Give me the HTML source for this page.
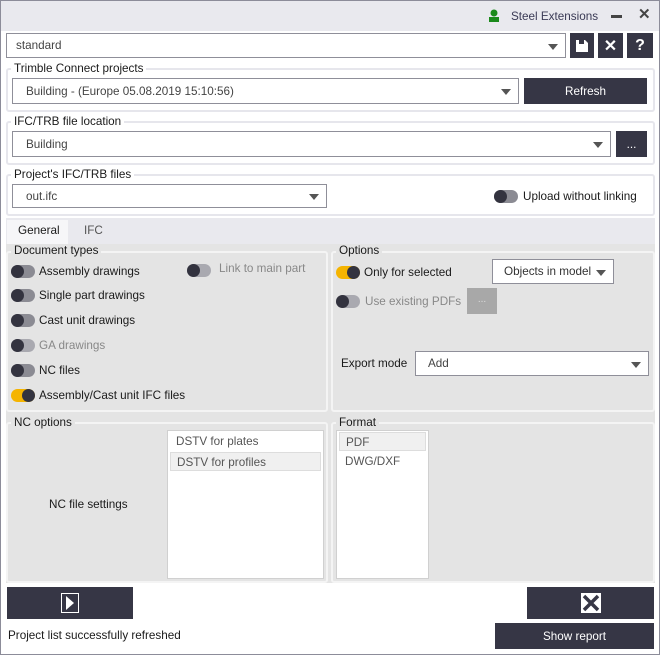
<!DOCTYPE html>
<html><head><meta charset="utf-8"><style>
*{box-sizing:border-box;margin:0;padding:0}
body{width:660px;height:655px;overflow:hidden;font-family:"Liberation Sans",sans-serif;font-size:11.7px;color:#1a1a1a;background:#fff;position:relative}
.a{position:absolute}
.combo{position:absolute;background:#fff;border:1px solid #8f8f99;color:#444;padding-left:13px;display:flex;align-items:center}
.combo:after{content:"";position:absolute;right:7px;top:50%;margin-top:-2px;border-left:5px solid transparent;border-right:5px solid transparent;border-top:6px solid #555}
.btn{position:absolute;background:#363645;color:#fff;display:flex;align-items:center;justify-content:center}
.grp{position:absolute;border:2px solid #e6e6ec;border-radius:3px}
.lbl{position:absolute;background:#fff;padding:0 3px;line-height:14px}
.gl{background:#e4e4e4}
.tg{position:absolute;width:24px;height:13px;border-radius:7px;background:#8b8b93}
.tg:after{content:"";position:absolute;left:0;top:0;width:13px;height:13px;border-radius:50%;background:#33333f}
.tg.on{background:#f5b400}
.tg.on:after{left:11px}
.tg.dis{background:#a9a9b0}
.t{position:absolute;line-height:14px}
.list{position:absolute;background:#fff;border:1px solid #d0d0d0}
.it{height:19px;line-height:19px;padding-left:6px;color:#555;margin:1px 2px 0}
.sel{background:#f0f0f0;border:1px solid #ddd}
</style></head><body>
<div class="a" style="left:0;top:0;width:660px;height:31px;background:#e9e9ee"></div>
<svg class="a" style="left:488px;top:9px" width="12" height="13"><circle cx="6" cy="4" r="3.5" fill="#1b8a1b"/><rect x="1" y="8" width="10" height="5" fill="#1b8a1b"/></svg>
<div class="t" style="left:511px;top:10px;color:#3a3a55">Steel Extensions</div>
<div class="a" style="left:611px;top:15px;width:11px;height:3px;background:#444"></div>
<div class="t" style="left:638px;top:8px;font-weight:bold;font-size:15px;color:#444">✕</div>

<div class="combo" style="left:6px;top:33px;width:560px;height:25px;padding-left:9px">standard</div>
<div class="btn" style="left:570px;top:33px;width:24px;height:25px"><svg width="12" height="12"><path d="M0 0H9L12 3V12H0Z" fill="#fff"/><rect x="3" y="0" width="5" height="4" fill="#363645"/></svg></div>
<div class="btn" style="left:598px;top:33px;width:25px;height:25px;font-weight:bold;font-size:16px">✕</div>
<div class="btn" style="left:627px;top:33px;width:26px;height:25px;font-weight:bold;font-size:16px">?</div>

<div class="grp" style="left:6px;top:68px;width:649px;height:44px"></div>
<div class="lbl" style="left:11px;top:62px">Trimble Connect projects</div>
<div class="combo" style="left:12px;top:78px;width:507px;height:26px">Building - (Europe 05.08.2019 15:10:56)</div>
<div class="btn" style="left:524px;top:78px;width:123px;height:26px">Refresh</div>

<div class="grp" style="left:6px;top:121px;width:649px;height:44px"></div>
<div class="lbl" style="left:11px;top:115px">IFC/TRB file location</div>
<div class="combo" style="left:12px;top:131px;width:599px;height:26px">Building</div>
<div class="btn" style="left:616px;top:131px;width:31px;height:26px">...</div>

<div class="grp" style="left:6px;top:174px;width:649px;height:42px"></div>
<div class="lbl" style="left:11px;top:168px">Project's IFC/TRB files</div>
<div class="combo" style="left:12px;top:184px;width:315px;height:24px">out.ifc</div>
<div class="tg" style="left:494px;top:190px"></div>
<div class="t" style="left:523px;top:190px">Upload without linking</div>

<div class="a" style="left:6px;top:218px;width:649px;height:365px;background:#e4e4e4"></div>
<div class="a" style="left:6px;top:218px;width:649px;height:26px;background:#e9e9ee"></div>
<div class="a" style="left:7px;top:220px;width:61px;height:24px;background:#f6f6f8"></div>
<div class="t" style="left:18px;top:224px">General</div>
<div class="t" style="left:84px;top:224px;color:#555">IFC</div>

<div class="grp" style="left:6px;top:251px;width:322px;height:161px;border-color:#f4f4f4"></div>
<div class="lbl gl" style="left:11px;top:244px">Document types</div>
<div class="tg" style="left:11px;top:265px"></div><div class="t" style="left:39px;top:265px">Assembly drawings</div>
<div class="tg dis" style="left:187px;top:264px"></div><div class="t" style="left:219px;top:262px;color:#888">Link to main part</div>
<div class="tg" style="left:11px;top:289px"></div><div class="t" style="left:39px;top:289px">Single part drawings</div>
<div class="tg" style="left:11px;top:314px"></div><div class="t" style="left:39px;top:314px">Cast unit drawings</div>
<div class="tg dis" style="left:11px;top:339px"></div><div class="t" style="left:39px;top:339px;color:#888">GA drawings</div>
<div class="tg" style="left:11px;top:364px"></div><div class="t" style="left:39px;top:364px">NC files</div>
<div class="tg on" style="left:11px;top:389px"></div><div class="t" style="left:39px;top:389px">Assembly/Cast unit IFC files</div>

<div class="grp" style="left:331px;top:251px;width:324px;height:161px;border-color:#f4f4f4"></div>
<div class="lbl gl" style="left:336px;top:244px">Options</div>
<div class="tg on" style="left:336px;top:266px"></div><div class="t" style="left:364px;top:266px">Only for selected</div>
<div class="combo" style="left:492px;top:259px;width:122px;height:25px;padding-left:11px;color:#333">Objects in model</div>
<div class="tg dis" style="left:336px;top:295px"></div><div class="t" style="left:365px;top:295px;color:#888">Use existing PDFs</div>
<div class="a" style="left:467px;top:288px;width:30px;height:26px;background:#a8a8a8;color:#ddd;text-align:center;line-height:24px;font-size:10px">...</div>
<div class="t" style="left:341px;top:357px">Export mode</div>
<div class="combo" style="left:415px;top:351px;width:234px;height:25px;padding-left:12px">Add</div>

<div class="grp" style="left:6px;top:422px;width:322px;height:161px;border-color:#f4f4f4"></div>
<div class="lbl gl" style="left:11px;top:416px">NC options</div>
<div class="t" style="left:49px;top:498px">NC file settings</div>
<div class="list" style="left:167px;top:430px;width:157px;height:149px"><div class="it">DSTV for plates</div><div class="it sel">DSTV for profiles</div></div>
<div class="grp" style="left:331px;top:422px;width:324px;height:161px;border-color:#f4f4f4"></div>
<div class="lbl gl" style="left:336px;top:416px">Format</div>
<div class="list" style="left:336px;top:430px;width:93px;height:149px"><div class="it sel">PDF</div><div class="it">DWG/DXF</div></div>

<div class="btn" style="left:7px;top:587px;width:126px;height:32px"><svg width="18" height="20"><rect x="0.5" y="0.5" width="17" height="19" fill="#363645" stroke="#fff"/><path d="M5 3L13 10L5 17Z" fill="#fff"/></svg></div>
<div class="btn" style="left:527px;top:587px;width:127px;height:32px"><svg width="20" height="20"><rect x="0.5" y="0.5" width="19" height="19" fill="#fff" stroke="#fff"/><path d="M3 3L17 17M17 3L3 17" stroke="#363645" stroke-width="3.5"/></svg></div>
<div class="t" style="left:8px;top:629px">Project list successfully refreshed</div>
<div class="btn" style="left:495px;top:623px;width:159px;height:26px">Show report</div>
<div class="a" style="left:0;top:0;width:660px;height:655px;border:1px solid #8c8c99"></div>
</body></html>
